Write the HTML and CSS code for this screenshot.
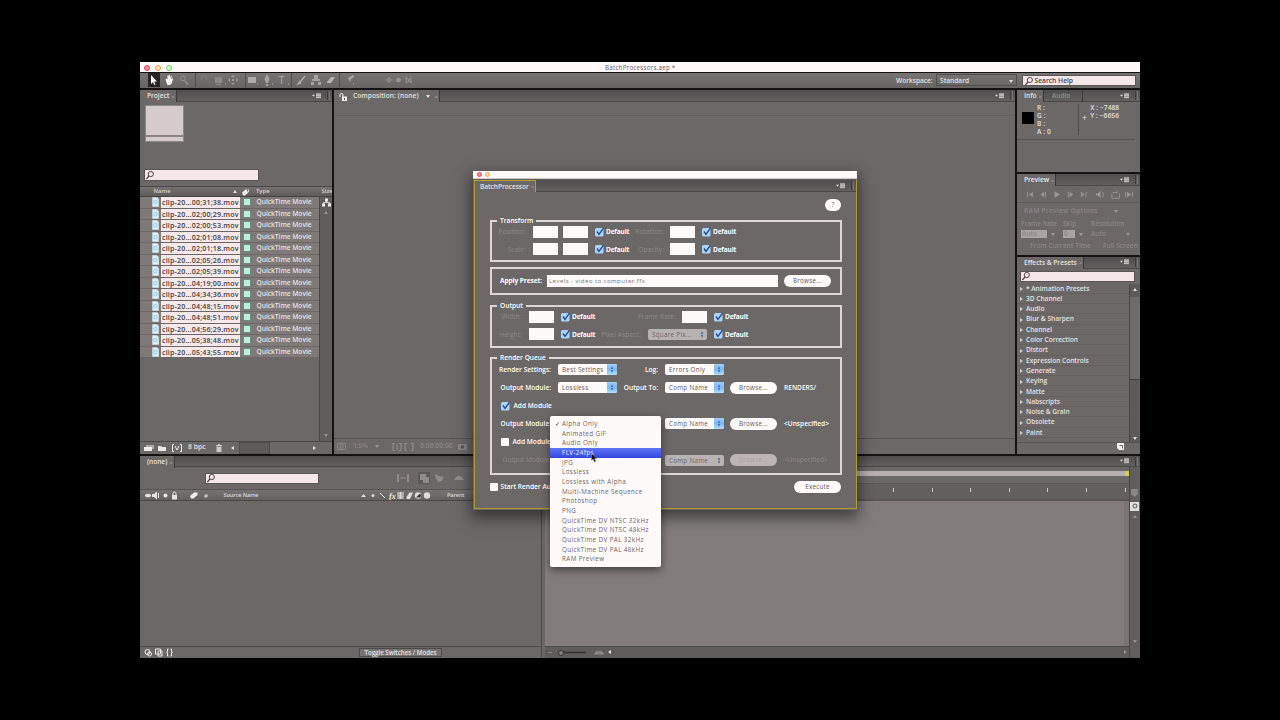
FILE: index.html
```html
<!DOCTYPE html>
<html lang="en">
<head>
<meta charset="utf-8">
<title>BatchProcessors.aep</title>
<link rel="stylesheet" href="styles.css">
</head>
<body>
<svg class="defs" width="0" height="0">
  <symbol id="mag" viewBox="0 0 10 10"><circle cx="5.8" cy="4" r="2.6" fill="none" stroke="#544" stroke-width="1"/><path d="M4 6L1.3 9" stroke="#544" stroke-width="1.2"/></symbol>
  <symbol id="flyout" viewBox="0 0 9 6"><path d="M0 1.8h3L1.5 3.8z" fill="#ddd"/><path d="M4 .3h5v5H4z" fill="#8f8b8b"/><path d="M4 1h5M4 2.7h5M4 4.4h5" stroke="#c9c6c6" stroke-width="1"/></symbol>
  <symbol id="file" viewBox="0 0 7 10"><path d="M.3.3h4.5l2 2v7.4H.3z" fill="#d9f0fa"/><path d="M4.8.3v2h2" fill="#fff" stroke="#8ab" stroke-width=".3"/><rect x="1.8" y="3.6" width="3.2" height="3.2" rx="1" fill="none" stroke="#8cc6e2" stroke-width=".9"/></symbol>
  <symbol id="tag" viewBox="0 0 9 8"><path d="M1 4.5L4.5 1.5H8v2.2L4 7.5H2z" fill="#eee"/><circle cx="6.6" cy="2.6" r=".8" fill="#555"/></symbol>
  <symbol id="flow" viewBox="0 0 9 9"><path d="M3 .5h3v3H3zM0 5.5h3v3H0zM6 5.5h3v3H6z" fill="#eee"/><path d="M4.5 3v1.5M1.5 6V4.5h6V6" fill="none" stroke="#eee" stroke-width=".8"/></symbol>
  <symbol id="tick" viewBox="0 0 10 10"><rect x="0" y="1" width="8.5" height="8.5" rx="1.5" fill="#a9d4fa"/><path d="M2 4.5l2 2.8L8.5 1.200" fill="none" stroke="#24488c" stroke-width="1.400"/></symbol>
</svg>
<div class="window">
  <div class="titlebar"><i class="dot red"></i><i class="dot orange"></i><i class="dot green"></i><span class="doc-title">BatchProcessors.aep *</span></div>
  <div class="toolbar">
    <svg width="285" height="16" viewBox="0 0 285 16">
      <rect x="8" y="1" width="12" height="14" fill="#262424"/>
      <path d="M11 3v9l2-2 1.3 3 1.2-.6L14.200 9.600h2.800z" fill="#fff"/>
      <path d="M25.500 7.500l1-1 1 1.200V3.600h1V7l.3-4h1l.2 4 .8-3.400.9.300-.6 3.800 1.200-1.500.9.400-1.700 4.800-1.500 1.600h-2.600z" fill="#fff"/>
      <g stroke="#969191" fill="none"><circle cx="43" cy="6.500" r="2.400"/><path d="M45 9l3 3.500" stroke-width="1.600"/><path d="M61 5h3M61 5v3M64 4q3 0 3 4" stroke="#827d7d"/></g>
      <path d="M75 5h7v6h-7zM76 12h5v1h-5z" fill="#8d8888"/>
      <path d="M93 3l2 2h-4zM93 13l2-2h-4zM88 8l2-2v4zM98 8l-2-2v4z" fill="#a09b9b"/><rect x="92" y="7" width="2" height="2" fill="#a09b9b"/>
      <path d="M55.500 1v14M105.500 1v14M151.500 1v14M199.500 1v14" stroke="#504d4d"/>
      <rect x="108" y="5" width="8" height="6" fill="#b0abab"/><path d="M117 12h1M132 12h1M148 12h1M85 12h1" stroke="#aaa"/>
      <path d="M127 2l2.500 5-1.500 4h-2l-1.500-4zM126 12h2v2h-2z" fill="#aaa5a5"/>
      <text x="138.500" y="12" font-family="Open Sans, sans-serif" font-size="11" font-weight="400" fill="#b0abab">T</text>
      <path d="M165 4l-5 6M160 9l-2 3 3-1" stroke="#b3aeae" fill="#b3aeae" stroke-width="1.300"/>
      <path d="M174 3h4v4h2v2h-8V7h2zM171 10h3v3h-3zM178 10h3v3h-3z" fill="#a8a3a3"/>
      <path d="M187 10l4-5h4l-4 6h-4z" fill="#b8b3b3"/>
      <path d="M208 6l2-1 3-2 1 2-3 2-1 3zM213 11h1v1h-1z" fill="#aaa5a5"/>
      <g stroke="#8f8a8a" fill="none"><path d="M249 5v6M245.500 8h7"/><circle cx="249" cy="8" r="2"/></g><circle cx="258.500" cy="8" r="2.300" fill="#9a9595"/><path d="M266 5v6M266 5l5 6M267 11l4-6M271 7v4" stroke="#9a9595" fill="none"/>
    </svg>
    <span class="ws-label">Workspace:</span>
    <div class="ws-select"><span>Standard</span><i class="tri down"></i></div>
    <div class="search help"><svg class="mag"><use href="#mag"/></svg><span>Search Help</span></div>
  </div>

  <div class="upper">
    <section class="panel project">
      <header class="tabs"><span class="tab">Project<b>×</b></span><svg class="fly"><use href="#flyout"/></svg><i class="grip"></i></header>
      <div class="thumb"></div>
      <div class="search proj-search"><svg class="mag"><use href="#mag"/></svg></div>
      <div class="table-head"><span class="c-name">Name</span><i class="tri up"></i><svg class="tagicon"><use href="#tag"/></svg><span class="c-type">Type</span><span class="c-size">Size</span></div>
      <div class="table-body">
        <div class="rows">
          <div class="row"><svg><use href="#file"/></svg><span class="clip">clip-20...00;31;38.mov</span><i class="lab"></i><span class="type">QuickTime Movie</span></div>
          <div class="row"><svg><use href="#file"/></svg><span class="clip">clip-20...02;00;29.mov</span><i class="lab"></i><span class="type">QuickTime Movie</span></div>
          <div class="row"><svg><use href="#file"/></svg><span class="clip">clip-20...02;00;53.mov</span><i class="lab"></i><span class="type">QuickTime Movie</span></div>
          <div class="row"><svg><use href="#file"/></svg><span class="clip">clip-20...02;01;08.mov</span><i class="lab"></i><span class="type">QuickTime Movie</span></div>
          <div class="row"><svg><use href="#file"/></svg><span class="clip">clip-20...02;01;18.mov</span><i class="lab"></i><span class="type">QuickTime Movie</span></div>
          <div class="row"><svg><use href="#file"/></svg><span class="clip">clip-20...02;05;26.mov</span><i class="lab"></i><span class="type">QuickTime Movie</span></div>
          <div class="row"><svg><use href="#file"/></svg><span class="clip">clip-20...02;05;39.mov</span><i class="lab"></i><span class="type">QuickTime Movie</span></div>
          <div class="row"><svg><use href="#file"/></svg><span class="clip">clip-20...04;19;00.mov</span><i class="lab"></i><span class="type">QuickTime Movie</span></div>
          <div class="row"><svg><use href="#file"/></svg><span class="clip">clip-20...04;34;36.mov</span><i class="lab"></i><span class="type">QuickTime Movie</span></div>
          <div class="row"><svg><use href="#file"/></svg><span class="clip">clip-20...04;48;15.mov</span><i class="lab"></i><span class="type">QuickTime Movie</span></div>
          <div class="row"><svg><use href="#file"/></svg><span class="clip">clip-20...04;48;51.mov</span><i class="lab"></i><span class="type">QuickTime Movie</span></div>
          <div class="row"><svg><use href="#file"/></svg><span class="clip">clip-20...04;56;29.mov</span><i class="lab"></i><span class="type">QuickTime Movie</span></div>
          <div class="row"><svg><use href="#file"/></svg><span class="clip">clip-20...05;38;48.mov</span><i class="lab"></i><span class="type">QuickTime Movie</span></div>
          <div class="row"><svg><use href="#file"/></svg><span class="clip">clip-20...05;43;55.mov</span><i class="lab"></i><span class="type">QuickTime Movie</span></div>
        </div>
        <div class="side-scroll"><svg width="9" height="9"><use href="#flow"/></svg><i class="tri up dim"></i><i class="tri down dim end"></i></div>
      </div>
      <footer class="proj-foot">
        <svg width="42" height="10" viewBox="0 0 42 10"><path d="M3 2h8v4H3z" fill="#aaa"/><path d="M1 4h8v4H1z" fill="#eee"/><path d="M15 3h3l1 1h4v4h-8z" fill="#e8e8e8"/><path d="M31 1.500h-1.500v7H31M37 1.500h1.500v7H37" stroke="#eee" fill="none"/><path d="M32 3l2 4 2-4" stroke="#eee" fill="none"/></svg>
        <span class="bpc">8 bpc</span>
        <svg class="trash" width="8" height="9" viewBox="0 0 8 9"><path d="M1 2h6v1H1zM3 1h2v1H3zM1.500 3.500h5V9h-5z" fill="#ccc8c8"/></svg>
        <i class="tri left"></i><i class="thumb-h"></i><i class="tri right"></i>
      </footer>
    </section>

    <section class="panel comp">
      <header class="tabs"><span class="tab"><svg class="lock" width="8" height="8" viewBox="0 0 8 8"><path d="M1 4V2a1.500 1.500 0 013 0v2" stroke="#eee" fill="none"/><path d="M3 3.500h5V8H3z" fill="#eee"/><path d="M5 5h1v2H5z" fill="#555"/></svg><span class="comp-name">Composition: (none)</span><i class="tri down"></i><b>×</b></span><svg class="fly"><use href="#flyout"/></svg><i class="grip"></i></header>
      <div class="comp-bar"></div>
      <footer class="comp-foot"><svg width="9" height="7" viewBox="0 0 9 7"><path d="M.5.500h8v6h-8zM3 2h3v3H3z" stroke="#8a8585" fill="none"/></svg><span>1.5%</span><i class="tri down dim"></i><svg class="brk" width="22" height="8" viewBox="0 0 22 8"><path d="M3 .500H1v7h2M7 .500h2v7H7M5 1v6M15 .500h-2v7h2M19 .500h2v7h-2" stroke="#969191" fill="none"/></svg><span class="time">0:00:00:00</span><svg width="9" height="7" viewBox="0 0 9 7"><path d="M0 1h9v6H0z" fill="#8a8585"/><circle cx="4.500" cy="4" r="1.700" fill="#555"/></svg></footer>
    </section>

    <div class="rightcol">
      <section class="panel info">
        <header class="tabs"><span class="tab">Info<b>×</b></span><span class="tab off">Audio</span><svg class="fly"><use href="#flyout"/></svg><i class="grip"></i></header>
        <div class="info-body"><i class="swatch"></i><div class="rgba"><p>R :</p><p>G :</p><p>B :</p><p>A : 0</p></div><i class="vsep"></i><i class="plus">+</i><div class="xy"><p>X : −7488</p><p>Y : −6656</p></div></div>
      </section>
      <section class="panel preview">
        <header class="tabs"><span class="tab">Preview<b>×</b></span><svg class="fly"><use href="#flyout"/></svg><i class="grip"></i></header>
        <svg class="transport" width="123" height="17" viewBox="3 -1 123 17"><g fill="#9a9595"><path d="M10 5h1v6h-1zM16 5v6l-4-3zM28 5v6l-4-3zM29 5h1v6h-1zM39 4.500v7l6-3.500zM53 5h1v6h-1zM55 5v6l4-3zM67 5v6l4-3zM72 5h1v6h-1zM83 7h2l3-3v8l-3-3h-2zM114 5h1v6h-1zM116 5v6l5-3z"/></g><path d="M90 5q2 3 0 6M100 7v5h8V7M101 6h5l-1-2M122 5v6" fill="none" stroke="#9a9595"/></svg>
        <div class="ram"><span>RAM Preview Options</span><i class="tri down dim"></i></div>
        <div class="pgrid"><span>Frame Rate</span><span>Skip</span><span class="res">Resolution</span></div>
        <div class="pgrid vals"><span><em class="w26">Auto</em><i class="tri down dim"></i></span><span><em>0</em><i class="tri down dim"></i></span><span class="res">Auto<i class="tri down dim far"></i></span></div>
        <div class="ram last"><span class="fct">From Current Time</span><span>Full Screen</span></div>
      </section>
      <section class="panel effects">
        <header class="tabs"><span class="tab">Effects &amp; Presets<b>×</b></span><svg class="fly"><use href="#flyout"/></svg><i class="grip"></i></header>
        <div class="search fx-search"><svg class="mag"><use href="#mag"/></svg></div>
        <div class="fx-body">
          <ul><li>* Animation Presets</li><li>3D Channel</li><li>Audio</li><li>Blur &amp; Sharpen</li><li>Channel</li><li>Color Correction</li><li>Distort</li><li>Expression Controls</li><li>Generate</li><li>Keying</li><li>Matte</li><li>Nabscripts</li><li>Noise &amp; Grain</li><li>Obsolete</li><li>Paint</li></ul>
          <div class="vscroll"><i class="tri up"></i><i class="vthumb"></i><i class="tri down"></i></div>
        </div>
        <footer class="fx-foot"><svg width="7" height="7" viewBox="0 0 7 7"><path d="M0 0h7v7H2L0 5z" fill="#eee"/><path d="M2.500 2.500h3v3" stroke="#666" fill="none"/></svg></footer>
      </section>
    </div>
  </div>

  <section class="panel timeline">
    <header class="tabs"><span class="tab thin">(none)<b>×</b></span><svg class="fly"><use href="#flyout"/></svg><i class="grip"></i></header>
    <div class="tl-main">
      <div class="tl-left">
        <div class="tl-tools"><div class="search tl-search"><svg class="mag"><use href="#mag"/></svg></div>
          <svg class="tl-icons" width="80" height="14" viewBox="0 0 80 14"><g fill="#918c8c"><path d="M1 3h2v8H1zM11 3h2v8h-2zM4 6.500h6v1H4z"/><rect x="22" y="1" width="12" height="12" fill="#5c5959"/><path d="M24 3h6v6h-6zM27 6h6v6h-6z"/><path d="M39 3l4 2 5 1-2 4-4 1-2-4zM58 9q5-8 10 0z"/></g></svg></div>
        <div class="tl-head">
          <svg width="70" height="9" viewBox="0 0 70 9"><g fill="#e6e3e3"><ellipse cx="8" cy="4.500" rx="3" ry="1.800"/><path d="M12 3h2l3-2.500v8L14 6h-2z"/><circle cx="25.500" cy="4.500" r="2"/><path d="M32 4h5v4.500h-5z"/></g><path d="M33 4V2.500a1.500 1.500 0 013 0V4M18.500 2v5" stroke="#eee" fill="none"/><path d="M50 5l4-3.500h3.500V4l-4 3.500H51z" fill="#eee"/><text x="64" y="7" font-size="6" font-family="Open Sans" fill="#ddd">#</text></svg>
          <span class="src">Source Name</span>
          <svg class="sw" width="72" height="9" viewBox="0 0 72 9"><g fill="#dedbdb"><path d="M1 6h5L3.500 3z"/><circle cx="13" cy="4.500" r="1.500"/><circle cx="58" cy="4.500" r="3.200"/><circle cx="67" cy="4.500" r="3.200"/><path d="M46.500 6l3-4.500H53L50 8h-3.500z"/><path d="M37.500 1h6v7h-6z"/></g><path d="M39 1v7M42 1v7" stroke="#666" stroke-width=".7"/><path d="M20 2l5 5" stroke="#eee"/><path d="M56 6.500l4-4a3 3 0 010 4z" fill="#333"/><text x="29" y="7.500" font-size="8" font-style="italic" font-family="Liberation Serif" font-weight="700" fill="#eee">fx</text></svg>
          <span class="parent">Parent</span>
        </div>
        <div class="tl-space"></div>
        <footer class="tl-foot"><svg width="32" height="9" viewBox="0 0 32 9"><g fill="none" stroke="#eee"><circle cx="4.500" cy="4" r="2.500"/><circle cx="6.500" cy="6" r="2"/><path d="M12.500 1h5v5h-5zM15 3h4v5h-4z"/><path d="M25.500 1h-1v3l-1 .5 1 .5v3h1M27.500 1h1v3l1 .5-1 .5v3h-1"/></g></svg><span class="toggle">Toggle Switches / Modes</span></footer>
      </div>
      <div class="tl-right">
        <div class="work"><i></i></div>
        <div class="ruler"></div>
        <div class="tracks"></div>
        <footer class="tl-foot r"><svg width="60" height="10" viewBox="0 0 60 10"><path d="M0 5.500h4M46 7l3-3 2 1 2-1 3 3z" fill="#8b8686" stroke="#8b8686"/><path d="M12 5.500h26" stroke="#343131" stroke-width="1.600"/><circle cx="13" cy="6" r="2.500" fill="#858080" stroke="#333"/></svg><i class="tri left"></i><i class="tri right dim"></i></footer>
      </div>
      <div class="tl-scroll"><svg width="10" height="24" viewBox="0 0 10 24"><path d="M1 1h7v5L4.500 9 1 6z" fill="#8b8686"/><rect y="14" width="9" height="9" fill="#e1dede"/><circle cx="5" cy="18" r="2" fill="none" stroke="#555"/></svg><i class="tri up dim"></i><i class="tri down dim end"></i></div>
    </div>
  </section>
</div>

<div class="dialog">
  <div class="dlg-title"><i class="dot red"></i><i class="dot orange"></i></div>
  <div class="dlg-inner">
    <header class="tabs"><span class="tab">BatchProcessor<b>×</b></span><svg class="fly"><use href="#flyout"/></svg><i class="grip"></i></header>
    <div class="dlg-body">
      <div class="help-line"><span class="btn q">?</span></div>
      <div class="group g1"><span class="legend">Transform</span>
        <div class="line"><label class="dis l41">Position:</label><i class="fld m5"></i><i class="fld m7"></i><svg class="ck"><use href="#tick"/></svg><span class="def">Default</span><label class="dis l35">Rotation:</label><i class="fld m7"></i><svg class="ck"><use href="#tick"/></svg><span class="def">Default</span></div>
        <div class="line"><label class="dis l41">Scale:</label><i class="fld m5"></i><i class="fld m7"></i><svg class="ck"><use href="#tick"/></svg><span class="def">Default</span><label class="dis l35">Opacity:</label><i class="fld m7"></i><svg class="ck"><use href="#tick"/></svg><span class="def">Default</span></div>
      </div>
      <div class="group g2"><label class="apply">Apply Preset:</label><span class="preset">Levels - video to computer.ffx</span><span class="btn">Browse...</span></div>
      <div class="group g3"><span class="legend">Output</span>
        <div class="line"><label class="dis l37">Width:</label><i class="fld m7"></i><svg class="ck"><use href="#tick"/></svg><span class="def">Default</span><div class="mid"><label class="dis">Frame Rate:</label><i class="fld"></i></div><svg class="ck"><use href="#tick"/></svg><span class="def">Default</span></div>
        <div class="line"><label class="dis l37">Height:</label><i class="fld m7"></i><svg class="ck"><use href="#tick"/></svg><span class="def">Default</span><div class="mid"><label class="dis pa">Pixel Aspect:</label><span class="sel off">Square Pix...<i></i></span></div><svg class="ck"><use href="#tick"/></svg><span class="def">Default</span></div>
      </div>
      <div class="group g4"><span class="legend">Render Queue</span>
        <div class="rq"><label>Render Settings:</label><span class="sel">Best Settings<i></i></span><label class="r2">Log:</label><span class="sel">Errors Only<i></i></span></div>
        <div class="rq"><label>Output Module:</label><span class="sel">Lossless<i></i></span><label class="r2">Output To:</label><span class="sel">Comp Name<i></i></span><span class="btn">Browse...</span><span class="path">RENDERS/</span></div>
        <div class="rq add"><svg class="ck"><use href="#tick"/></svg><span class="addm">Add Module</span></div>
        <div class="rq"><label>Output Module:</label><span class="sel"></span><label class="r2"></label><span class="sel">Comp Name<i></i></span><span class="btn">Browse...</span><span class="path">&lt;Unspecified&gt;</span></div>
        <div class="rq add"><i class="ck0"></i><span class="addm">Add Module</span></div>
        <div class="rq disabled"><label>Output Module:</label><span class="sel off"></span><label class="r2"></label><span class="sel off">Comp Name<i></i></span><span class="btn off">Browse...</span><span class="path">&lt;Unspecified&gt;</span></div>
      </div>
      <div class="exec"><i class="ck0"></i><span class="start">Start Render Au</span><span class="btn">Execute</span></div>
    </div>
  </div>
</div>

<ul class="menu"><li class="on">Alpha Only</li><li>Animated GIF</li><li>Audio Only</li><li class="hot">FLV-24fps</li><li>JPG</li><li>Lossless</li><li>Lossless with Alpha</li><li>Multi-Machine Sequence</li><li>Photoshop</li><li>PNG</li><li>QuickTime DV NTSC 32kHz</li><li>QuickTime DV NTSC 48kHz</li><li>QuickTime DV PAL 32kHz</li><li>QuickTime DV PAL 48kHz</li><li>RAM Preview</li></ul>
<svg class="cursor" width="7" height="10" viewBox="0 0 7 10"><path d="M.5.500v7l1.600-1.500L3.300 9l1.500-.7L3.600 5.600h2.500z" fill="#111" stroke="#99c" stroke-width=".5"/></svg>
</body>
</html>
```

FILE: styles.css
```css
* { box-sizing: border-box; margin: 0; padding: 0; }
body { background: #000; width: 1280px; height: 720px; overflow: hidden; position: relative; font: 600 6.600px/1 "Open Sans", "Noto Sans", sans-serif; color: #e4e0e0; white-space: nowrap; }
i, em { font-style: normal; display: block; flex: none; }
ul { list-style: none; }
svg { flex: none; display: block; }
.defs { position: absolute; }
.window { margin: 62px 0 0 140px; width: 1000px; height: 595.5px; background: #141212; display: flex; flex-direction: column; }

.titlebar { height: 10px; background: #fff8f8; display: flex; align-items: center; padding: 1px 0 0 4px; gap: 5px; margin-bottom: .5px; flex: none; }
.dot { width: 6px; height: 6px; border-radius: 50%; border: 1.5px solid; }
.red { border-color: #d8475a; background: #ef8a94; }
.orange { border-color: #efa255; background: #fbe0b8; }
.green { border-color: #72cf70; background: #d8f7d0; }
.doc-title { margin-left: 428px; padding-top: 1px; color: #655f60; font-weight: 400; font-size: 6.2px; letter-spacing: .25px; }

.toolbar { height: 15.500px; flex: none; background: linear-gradient(#777373, #676464); display: flex; align-items: center; margin-bottom: 2px; overflow: hidden; }
.ws-label { margin-left: 471px; width: 40px; letter-spacing: -.03px; padding-top: 2px; }
.ws-select { width: 81px; height: 12px; border: 1px solid #514e4e; display: flex; align-items: center; justify-content: space-between; padding: 2px 3px 0; }
.search { background: #f5e6e8; border: 1px solid #5a5555; color: #494346; display: flex; align-items: center; flex: none; }
.mag { width: 10px; height: 10px; }
.help { width: 114px; height: 11px; margin: 1px 0 0 5px; padding-left: 1px; }
.help span { font-size: 6.700px; padding: 1px 0 0 .5px; }

.tri { width: 0; height: 0; border: 2.5px solid transparent; }
.tri.down { border-top: 3.500px solid #e4e0e0; border-bottom: 0; }
.tri.up { border-bottom: 3.500px solid #e4e0e0; border-top: 0; }
.tri.left { border-right: 3.500px solid #e4e0e0; border-left: 0; }
.tri.right { border-left: 3.500px solid #e4e0e0; border-right: 0; }
.tri.dim { opacity: .4; }

.upper { display: flex; height: 364px; flex: none; gap: 2px; margin-bottom: 2px; }
.panel { background: #6c6867; display: flex; flex-direction: column; overflow: hidden; }
.tabs { height: 12px; flex: none; background: linear-gradient(#4f4d4d, #625f5f); display: flex; align-items: center; border-bottom: 1px solid #4b4848; }
.tab { height: 12px; background: #6c6867; padding: 1px 1px 0 7px; display: flex; align-items: center; border-right: 1px solid #3c3939; align-self: flex-start; letter-spacing: -.03px; }
.tab b { font-weight: 400; color: #a8a3a3; margin-left: 2px; font-size: 6px; }
.tab.off { background: none; color: #8b9492; padding: 1px 12px 0 8px; }
.fly { width: 9px; height: 6px; margin-left: auto; }
.grip { width: 3px; height: 9px; margin: 0 2px 0 6px; border-left: 1px solid #3d3a3a; border-right: 1px solid #777; }

.project { width: 192px; flex: none; }
.thumb { width: 39px; height: 37px; margin: 3px 0 0 4.500px; background: linear-gradient(#d5cacc 29.500px, #8b8283 29.500px 31px, #d5cacc 31px); border: 1px solid #888; flex: none; }
.proj-search { width: 115px; height: 12px; margin: 26.500px 0 0 4px; }
.table-head { margin-top: 5.500px; height: 11px; flex: none; background: linear-gradient(#777272, #5e5b5b); border-top: 1px solid #4a4747; border-bottom: 1px solid #454242; display: flex; align-items: center; font-size: 5.900px; color: #d8d4d4; overflow: hidden; }
.c-name { margin-left: 13.500px; width: 78px; flex: none; }
.tagicon { width: 9px; height: 8px; margin-left: 4px; }
.table-head .tri { margin-left: 1px; }
.c-type { margin-left: 6.500px; width: 65.500px; flex: none; }
.table-body { flex: 1; display: flex; }
.rows { flex: 1; }
.row { height: 11.500px; background: #7f7978; border-bottom: 1px solid #6c6867; display: flex; align-items: center; padding-left: 12px; }
.row svg { width: 7px; height: 10px; }
.clip { margin-left: 2px; width: 79px; height: 10.500px; background: #f7e8ea; color: #453f41; padding-left: 1px; line-height: 11px; font-size: 7.100px; letter-spacing: .16px; }
.lab { width: 6px; height: 6px; background: #bdf0dc; margin-left: 3.500px; outline: 1px solid #6d8a80; }
.type { margin-left: 7px; padding-top: 1px; font-size: 6.700px; letter-spacing: -.04px; }
.side-scroll { width: 13px; background: #605d5c; border-left: 1px solid #484545; display: flex; flex-direction: column; align-items: center; gap: 4px; padding: 1px 0 15px; }
.end { margin-top: auto; }
.proj-foot { height: 13.500px; flex: none; border-top: 1px solid #4b4848; display: flex; align-items: center; padding-left: 3px; }
.side-scroll .end { margin-bottom: -11px; }
.bpc { margin-left: 3px; font-size: 6.900px; }
.trash { margin-left: 9px; }
.proj-foot .left { margin-left: 8px; }
.thumb-h { width: 31px; height: 12px; margin: 0 43px 0 5px; background: #5d5a59; border: 1px solid #4d4a4a; }

.comp { width: 681px; flex: none; }
.comp .tab { padding-left: 5px; }
.comp-name { margin: 0 7px 0 6px; letter-spacing: .07px; }
.comp .tab b { margin-left: 5px; }
.comp-bar { height: 14px; border-bottom: 1px solid #625e5d; }
.comp-foot { margin-top: auto; height: 16px; border-top: 1px solid #555251; display: flex; align-items: center; gap: 7px; padding-left: 3px; color: #8b8686; }
.brk { margin: 0 -1px 0 6px; }
.time { letter-spacing: .08px; margin-right: -2px; }

.rightcol { flex: 1; min-width: 0; display: flex; flex-direction: column; gap: 2px; }
.info { height: 82px; }
.info-body { height: 38px; display: flex; padding: 2px 0 0 4.500px; margin-right: 5px; border-bottom: 1px solid #565352; }
.swatch { width: 12px; height: 12px; background: #000; margin-top: 8px; }
.rgba, .xy { line-height: 8px; letter-spacing: .1px; flex: none; }
.rgba { margin-left: 3.500px; width: 41px; }
.vsep { width: 1px; height: 31px; background: #504d4d; }
.plus { font-size: 9px; font-weight: 400; margin: 8.500px 3px 0 3px; }
.xy { margin-left: 0; }
.preview { height: 80.500px; color: #8b8686; }
.preview .tab { color: #ebe7e7; }
.transport { border-bottom: 1px solid #5d5a59; }
.ram { display: flex; justify-content: space-between; align-items: center; padding: 5px 22px 0 7px; letter-spacing: .28px; }
.ram.last { padding: 5px 0 0 13px; gap: 12px; justify-content: flex-start; letter-spacing: .03px; }
.pgrid { display: grid; grid-template-columns: 42px 28px 1fr; padding: 6px 0 0 4px; letter-spacing: -.05px; }
.pgrid.vals { padding-top: 3px; }
.pgrid span { display: flex; align-items: center; }
.pgrid em { width: 12px; height: 8px; background: #aaa3a3; line-height: 8px; padding-left: 1px; }
.pgrid .w26 { width: 26px; }
.pgrid .tri { margin-left: 4px; }
.pgrid .far { margin-left: 20px; }
.effects { flex: 1; }
.fx-search { width: 115px; height: 11px; margin: 2px 0 0 2.500px; }
.fx-body { display: flex; height: 159.500px; flex: none; margin-top: 2px; overflow: hidden; border-bottom: 1px solid #565352; }
.fx-body ul { flex: 1; }
.fx-body li { height: 10.300px; display: flex; align-items: center; padding: 1.500px 0 0 3px; gap: 3px; border-bottom: 1px solid #646160; font-size: 6.600px; letter-spacing: -.02px; }
.fx-body li::before { content: ""; border: 2px solid transparent; border-left: 3.500px solid #d0cccc; border-right: 0; }
.vscroll { width: 11px; background: #5d5a59; border-left: 1px solid #494646; display: flex; flex-direction: column; align-items: center; padding: 4px 0 2px; justify-content: space-between; }
.vthumb { width: 10px; height: 83px; background: #6f6b6a; border-bottom: 1px solid #403d3d; margin-bottom: 50px; }
.fx-foot { padding: 0 0 0 100px; }

.timeline { flex: 1; }
.timeline .tabs { height: 11px; }
.tl-main { flex: 1; display: flex; }
.tl-left { width: 402px; flex: none; display: flex; flex-direction: column; border-right: 1px solid #4d4a4a; }
.tl-tools { height: 22px; display: flex; align-items: center; overflow: hidden; }
.tl-search { width: 114px; height: 11px; margin-left: 65px; }
.tl-icons { margin-left: 77px; }
.tl-head { height: 12px; background: linear-gradient(#777272, #656160); border-top: 1px solid #555; border-bottom: 1px solid #4a4747; display: flex; align-items: center; font-size: 5.600px; color: #dedada; }
.src { margin-left: 13.500px; width: 136.500px; padding-top: 1.500px; letter-spacing: -.1px; }
.parent { margin-left: 15px; padding-top: 1.500px; letter-spacing: -.1px; }
.tl-space { flex: 1; }
.tl-foot { height: 12px; border-top: 1px solid #4e4b4b; display: flex; align-items: center; padding-left: 3px; }
.toggle { margin-left: 184px; width: 83px; height: 9px; border: 1px solid #4d4a4a; background: #777272; line-height: 7px; text-align: center; font-size: 6.200px; letter-spacing: -.03px; }
.tl-right { flex: 1; display: flex; flex-direction: column; padding-left: 3px; }
.work { height: 16px; padding-top: 4px; }
.work i { height: 5px; background: linear-gradient(90deg, #b7b0b0 580px, #d3d33f 580px); }
.ruler { height: 18px; border-top: 1px solid #5c5857; border-bottom: 2px solid #5a5656; background: repeating-linear-gradient(90deg, #c9c5c5 0 1px, transparent 1px 38.650px) 0 4px / 100% 4px no-repeat #656060; }
.tracks { flex: 1; background: #827d7c; border-right: 5px solid #7a7574; }
.tl-foot.r { background: #5f5c5b; }
.tl-foot.r .right { margin-left: auto; margin-right: 2px; }
.tl-scroll { width: 11px; border-left: 1px solid #4a4747; background: #625e5d; display: flex; flex-direction: column; align-items: center; padding: 21px 0 15px; gap: 3px; }

.dialog { position: absolute; left: 473px; top: 171px; width: 384px; height: 339px; background: #6c6867; box-shadow: 0 6px 14px 2px rgba(0,0,0,.5); display: flex; flex-direction: column; }
.dlg-title { height: 8px; background: #fffafa; display: flex; align-items: center; gap: 3px; padding-left: 4px; border-bottom: 1px solid #cfc6c6; flex: none; }
.dlg-title .dot { width: 5px; height: 5px; border-width: 1.200px; }
.dlg-inner { flex: 1; border: 1px solid #b39a2e; border-top-color: #625f5f; margin: 0 0 1px 1px; display: flex; flex-direction: column; overflow: hidden; }
.dialog .tab { border: 1px solid #b89f31; border-left: 0; border-bottom: 0; padding-left: 5px; letter-spacing: -.06px; }
.dlg-body { padding: 5.500px 15px 0; color: #fff; }
.help-line { display: flex; justify-content: flex-end; height: 22px; padding-top: 1px; }
.btn { height: 12px; width: 47px; border-radius: 6px; background: #fffafa; color: #5d5759; font-weight: 400; letter-spacing: .3px; font-size: 6.200px; line-height: 12px; text-align: center; flex: none; }
.btn.q { width: 16px; }
.group { border: 2px solid #dcd6d6; position: relative; width: 351.500px; }
.legend { position: absolute; left: 5px; top: -6px; background: #6c6867; padding: 0 3px; font-size: 6.600px; line-height: 9px; }
.g1 { height: 42.500px; padding-top: 1.500px; }
.g2 { height: 28px; margin-top: 5px; display: flex; align-items: center; padding-left: 8px; }
.g3 { height: 43px; margin-top: 9.500px; padding-top: 1.500px; }
.g4 { height: 118px; margin-top: 9px; padding-top: 2px; }
.line { display: flex; align-items: center; height: 17.500px; }
label { font-size: 6.600px; text-align: right; flex: none; padding-top: 1px; }
.dis { color: #8d8888; font-weight: 400; letter-spacing: .1px; padding-top: 1.500px; }
.l41 { width: 41px; padding-right: 7px; }
.l37 { width: 37px; padding-right: 7px; }
.l35 { width: 35px; padding-right: 6px; }
.fld { width: 25px; height: 12px; background: #fffafa; }
.m5 { margin-right: 5px; }
.m7 { margin-right: 7px; }
.ck { width: 10px; height: 10px; flex: none; }
.def { width: 30px; padding: 1px 0 0 1px; font-size: 6.500px; font-weight: 700; letter-spacing: -.14px; }
.apply { width: 47px; text-align: left; letter-spacing: -.1px; font-weight: 700; }
.preset { width: 231px; height: 12px; background: #fffafa; color: #777072; font-weight: 400; line-height: 12px; padding-left: 2px; margin-right: 6px; letter-spacing: .42px; font-size: 6.100px; }
.mid { width: 113px; display: flex; align-items: center; justify-content: flex-end; gap: 6px; padding-right: 7px; }
.pa { margin-right: 1px; }
.sel { width: 59px; height: 11px; border-radius: 2px; background: #fffafa; color: #5d5759; font-weight: 400; line-height: 11px; padding-left: 4px; letter-spacing: .33px; font-size: 6.200px; display: flex; justify-content: space-between; flex: none; overflow: hidden; }
.sel i { width: 10px; background: linear-gradient(#9ccffb, #7bb8f5 50%, #b0e0ff); position: relative; }
.sel i::before, .sel i::after { content: ""; position: absolute; left: 3.500px; border: 1.700px solid transparent; }
.sel i::before { top: 2px; border-bottom: 3px solid #3c6296; border-top: 0; }
.sel i::after { bottom: 2px; border-top: 3px solid #3c6296; border-bottom: 0; }
.sel.off { background: #b9b2b2; color: #6b6566; }
.sel.off i { background: none; }
.rq { display: flex; align-items: center; height: 18.150px; }
.rq label { width: 66px; padding-right: 7px; }
.rq .r2 { width: 48px; padding-right: 7px; }
.rq .btn { margin-left: 6px; }
.path { margin-left: 7px; padding-top: 1px; }
.rq.add { padding-left: 9px; }
.addm { margin-left: 2.500px; padding-top: .5px; }
.ck0 { width: 8px; height: 8px; border-radius: 1px; background: #fffafa; margin-right: 1px; }
.disabled { color: #8d8888; }
.disabled label, .disabled .path { font-weight: 400; }
.btn.off { background: #bdb5b5; color: #a9a2a2; }
.exec { display: flex; align-items: center; margin-top: 5.500px; height: 14px; padding-left: 0; }
.start { margin-left: 1.500px; flex: 1; padding-top: .5px; }

.menu { position: absolute; left: 549.500px; top: 416px; width: 111.500px; height: 151px; border-radius: 2px; background: #fffafa; color: #6a6466; padding-top: 3px; font-weight: 400; font-size: 6.300px; letter-spacing: .38px; box-shadow: 0 3px 8px rgba(0,0,0,.5); }
.menu li { height: 9.680px; line-height: 9.400px; padding-left: 12.500px; }
.menu .on::before { content: "✓"; display: inline-block; width: 7px; margin-left: -7px; letter-spacing: 0; color: #333; }
.menu .hot { background: linear-gradient(#5b74f5, #3446e0); color: #e6eaff; }
.cursor { position: absolute; left: 591px; top: 453px; }
```
